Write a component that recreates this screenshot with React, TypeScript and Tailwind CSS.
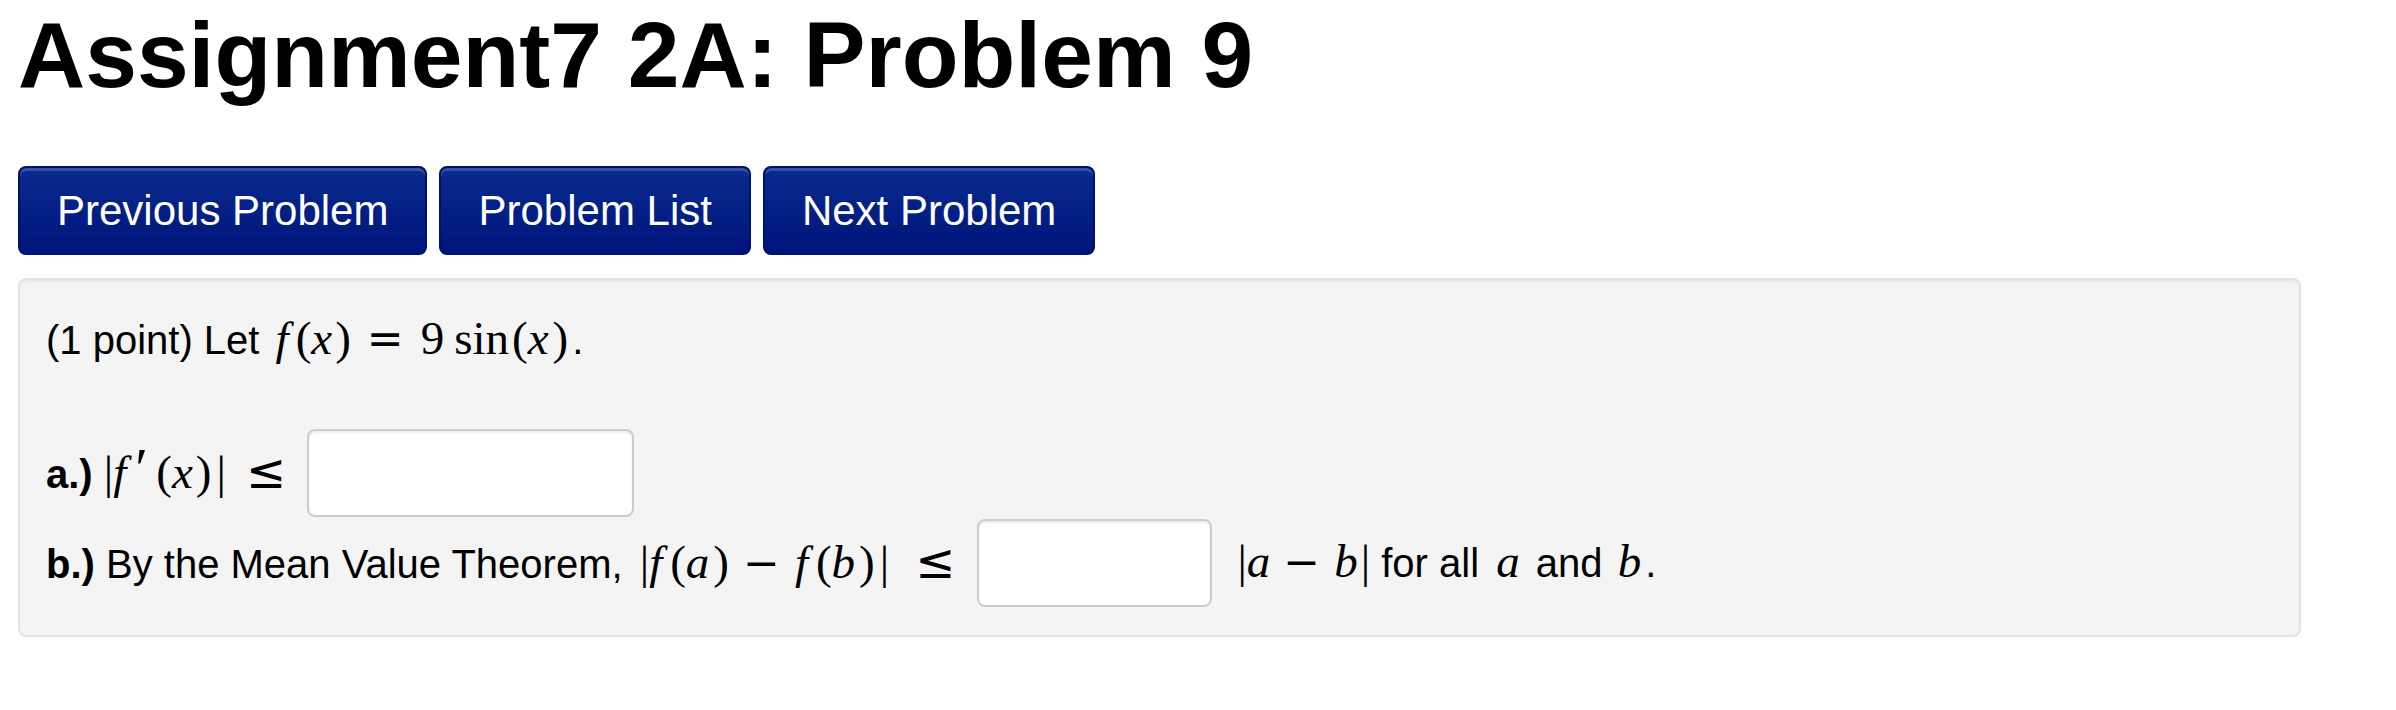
import React from 'react';

// math set in a Times-like face, operators in DejaVu for the wider MathJax look
const math = "font-['Liberation_Serif',serif] text-[47px] leading-none";
const op = "font-['DejaVu_Sans',sans-serif] text-[44px] leading-none";
const leq = "font-['DejaVu_Sans',sans-serif] text-[48px] leading-none";

const NavButton: React.FC<{ label: string }> = ({ label }) => (
  <button className="h-[89px] px-[37px] rounded-[8px] border-2 border-[#00106e] bg-linear-to-b from-[#0b2a8e] to-[#00137c] text-white text-[42px] leading-none shadow-[inset_0_3px_0_rgba(255,255,255,0.18)]">
    {label}
  </button>
);

const AnswerBox: React.FC<{ width: string }> = ({ width }) => (
  <input
    type="text"
    className={`${width} h-[88px] shrink-0 rounded-[8px] border-2 border-[#cccccc] bg-white shadow-[inset_0_2px_2px_rgba(0,0,0,0.075)] outline-none`}
  />
);

export default function App() {
  return (
    <div className="min-h-screen bg-white px-[18px] pt-[9px] text-black font-['Liberation_Sans',Arial,sans-serif]">
      <h1 className="text-[93px] leading-none font-bold">Assignment7 2A: Problem 9</h1>

      <div className="mt-[64px] flex gap-[12px]">
        <NavButton label="Previous Problem" />
        <NavButton label="Problem List" />
        <NavButton label="Next Problem" />
      </div>

      <div className="mt-[23px] w-[2283px] rounded-[8px] border-2 border-[#e3e3e3] bg-[#f4f4f4] pl-[26px] pt-[25px] pb-[28px] text-[40px] shadow-[inset_0_2px_2px_rgba(0,0,0,0.05)]">
        <p className="leading-[70px] whitespace-nowrap">
          (1 point) Let{' '}
          <span className={`${math} ml-[5px]`}>
            <i>f</i>
            <span className="ml-[7px]">(</span>
            <i>x</i>
            <span className="ml-[3px]">)</span>
          </span>
          <span className={`${op} ml-[16px]`}>=</span>
          <span className={`${math} ml-[17px]`}>9</span>
          <span className={`${math} ml-[10px]`}>
            sin<span className="ml-[3px]">(</span>
            <i>x</i>
            <span className="ml-[4px]">)</span>
          </span>
          <span className="ml-[4px]">.</span>
        </p>

        <div className="mt-[54px] flex h-[88px] items-center">
          <span className="leading-[50px] whitespace-nowrap">
            <b>a.)</b>{' '}
            <span className={math}>
              |<i>f</i>
              <span className="inline-block w-[30px] pl-[9px] text-[58px] leading-[0]">′</span>(<i>x</i>
              <span className="ml-[3px]">)</span>
              <span className="ml-[5px]">|</span>
            </span>
            <span className={`${leq} ml-[20px]`}>≤</span>
          </span>
          <span className="ml-[21px]">
            <AnswerBox width="w-[327px]" />
          </span>
        </div>

        <div className="mt-[2px] flex h-[88px] items-center">
          <span className="leading-[50px] whitespace-nowrap">
            <b>b.)</b> By the Mean Value Theorem,{' '}
            <span className={`${math} ml-[6px]`}>
              |<i>f</i>
              <span className="ml-[8px]">(</span>
              <i>a</i>
              <span className="ml-[4px]">)</span>
            </span>
            <span className={`${op} ml-[14px]`}>−</span>
            <span className={`${math} ml-[15px]`}>
              <i>f</i>
              <span className="ml-[8px]">(</span>
              <i>b</i>
              <span className="ml-[4px]">)</span>
              <span className="ml-[5px]">|</span>
            </span>
            <span className={`${leq} ml-[26px]`}>≤</span>
          </span>
          <span className="ml-[22px]">
            <AnswerBox width="w-[235px]" />
          </span>
          <span className="ml-[25px] leading-[50px] whitespace-nowrap">
            <span className={math}>
              |<i>a</i>
            </span>
            <span className={`${op} ml-[13px]`}>−</span>
            <span className={`${math} ml-[14px]`}>
              <i>b</i>
              <span className="ml-[3px]">|</span>
            </span>{' '}
            for all <i className={`${math} ml-[6px] mr-[5px]`}>a</i> and{' '}
            <i className={`${math} ml-[4px]`}>b</i>
            <span className="ml-[4px]">.</span>
          </span>
        </div>
      </div>
    </div>
  );
}
